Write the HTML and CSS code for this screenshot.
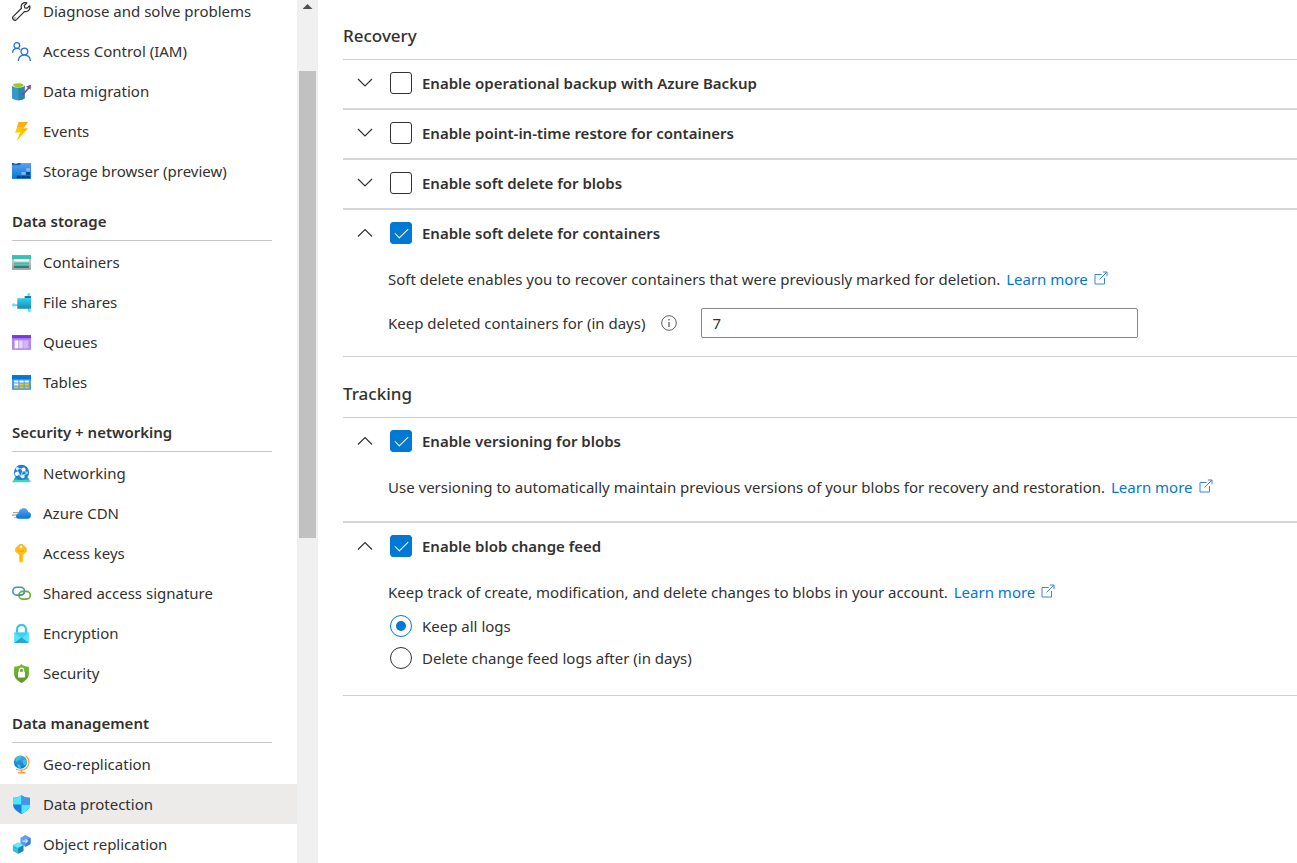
FILE: index.html
```
<!DOCTYPE html>
<html lang="en">
<head>
    <meta charset="utf-8">
    <meta name="viewport" content="width=device-width, initial-scale=1.0">
    <title>Data protection</title>
    <link rel="stylesheet" href="styles.css">
</head>
<body>
<svg class="defs" aria-hidden="true">
    <defs>
        <linearGradient id="blue" x1="0" y1="0" x2="0" y2="1"><stop offset="0" stop-color="#5ea0ef"/><stop offset="1" stop-color="#0078d4"/></linearGradient>
        <linearGradient id="cyan" x1="0" y1="0" x2="0" y2="1"><stop offset="0" stop-color="#32d4f5"/><stop offset="1" stop-color="#198ab3"/></linearGradient>
        <linearGradient id="green" x1="0" y1="0" x2="0" y2="1"><stop offset="0" stop-color="#76bc2d"/><stop offset="1" stop-color="#5e9624"/></linearGradient>
        <linearGradient id="gold" x1="0" y1="0" x2="0" y2="1"><stop offset="0" stop-color="#feb21a"/><stop offset="1" stop-color="#ffd70f"/></linearGradient>
        <linearGradient id="grey" x1="0" y1="0" x2="0" y2="1"><stop offset="0" stop-color="#e4e4e4"/><stop offset="1" stop-color="#9a9a9a"/></linearGradient>
        <symbol id="down" viewBox="0 0 16 16"><path d="M1 4l7 7 7-7" fill="none" stroke="#323130" stroke-width="1.200"/></symbol>
        <symbol id="up" viewBox="0 0 16 16"><path d="M1 11.500l7-7 7 7" fill="none" stroke="#323130" stroke-width="1.200"/></symbol>
        <symbol id="external" viewBox="0 0 14 14"><path d="M7.500 3.500H1v9.500h9.500V7M5.500 8.500L13 1M8.800 1H13v4.200" fill="none" stroke="#3b84dc" stroke-width="1"/></symbol>
    </defs>
</svg>
<div class="page">
    <nav class="sidebar">
        <div class="menu">
            <a href="#" class="item">
                <svg class="icon" viewBox="0 0 18 18"><path d="M16.800 3.600l-2.700 2.300-2-.4-.5-2L14 .9C11.700 0 8.900 1.300 8.700 4.100c0 .7.100 1.300.3 1.800L1.200 13.600c-1.700 1.900 1 4.900 3.100 3.100L12 8.900c2.800 1 5.800-1.700 4.800-5.300z" fill="none" stroke="#323130" stroke-width="1.200" stroke-linejoin="round"/><circle cx="2.800" cy="15" r=".6" fill="#323130"/></svg>
                Diagnose and solve problems
            </a>
            <a href="#" class="item">
                <svg class="icon" viewBox="0 0 18 18" fill="none" stroke="#1a6fdf" stroke-width="1.200"><circle cx="4.600" cy="3.300" r="2.700"/><circle cx="11.700" cy="8.900" r="3.200"/><path d="M.6 10.200C.7 7.500 2.500 6 4.800 6c1.200 0 2.200.5 2.900 1.300M6 18c0-3.500 2.500-5.900 5.700-5.900s5.700 2.400 5.700 5.900"/></svg>
                Access Control (IAM)
            </a>
            <a href="#" class="item">
                <svg class="icon" viewBox="0 0 18 18"><path d="M0 3v12c0 1.300 2.700 2.300 6 2.300s6-1 6-2.300V3z" fill="#3999c6"/><path d="M6 3v14.300c3.300 0 6-1 6-2.300V3z" fill="#2b86b5"/><ellipse cx="6" cy="3" rx="6" ry="2.300" fill="#edf3ee"/><ellipse cx="6" cy="3" rx="4.800" ry="1.700" fill="#9bca22"/><path d="M9 12.200l6-6.800-1.800-1.200L18 2.600l-.4 5-1.300-1.100-6.200 6.500z" fill="#804998"/></svg>
                Data migration
            </a>
            <a href="#" class="item">
                <svg class="icon" viewBox="0 0 18 18"><path d="M6.300 0h9l-4.800 6.200h4.800L4.400 18l3.200-8H3z" fill="#ffca00"/><path d="M6.300 0h9l-4.800 6.200h4.800L8 9.900l2.500-5.200L4.800 5z" fill="#fbae15"/></svg>
                Events
            </a>
            <a href="#" class="item">
                <svg class="icon" viewBox="0 0 18 18"><path d="M0 1h18v15H0z" fill="url(#blue)"/><path d="M0 1h8v2H0z" fill="#0064b8"/><path d="M2 1h3v1H2z" fill="#50e6ff"/><path d="M13.500 6H17v3h-3.500zM9 9.500h4v2.500H9z" fill="#83b9f9"/><path d="M13.500 9.500H17V12h-3.500zM4.500 13h3.800v2.500H4.500zM9 13h4v2.500H9zM13.500 13H17v2.500h-3.500z" fill="#003f86"/></svg>
                Storage browser (preview)
            </a>

            <h2 class="group">Data storage</h2>
            <a href="#" class="item">
                <svg class="icon" viewBox="0 0 18 18"><path d="M0 2h18v14H0z" fill="url(#grey)"/><path d="M0 2h18v4H0z" fill="#37c2b1"/><path d="M2 6h14v2H2z" fill="#fff"/><path d="M2 9h14v2H2z" fill="#37c2b1"/><path d="M2 12h14v2.200H2z" fill="#258277"/></svg>
                Containers
            </a>
            <a href="#" class="item">
                <svg class="icon" viewBox="0 0 18 18"><path d="M1.500 11.500H6M15 4l1-3M15 13l1.500 3.500" stroke="#0078d4" stroke-width=".8"/><path d="M12 3h6v4h-6z" fill="#005ba1"/><path d="M5 5h6.500L13 4.500h5V15H5z" fill="url(#cyan)"/><circle cx="1.600" cy="11.300" r="1.500" fill="#50e6ff"/><circle cx="15.900" cy="1.400" r="1.300" fill="#50e6ff"/><circle cx="16.500" cy="16.500" r="1.500" fill="#50e6ff"/></svg>
                File shares
            </a>
            <a href="#" class="item">
                <svg class="icon" viewBox="0 0 18 18"><path d="M0 2h18v14H0z" fill="#b186ee"/><path d="M0 2h18v3H0z" fill="#773adc"/><path d="M2.500 7H6v7.500H2.500z" fill="#fff"/><path d="M6.800 7h3.400v7.500H6.800z" fill="#e6d8fa"/><path d="M10.700 7H15.700v7.500h-5z" fill="#d0b6f6"/></svg>
                Queues
            </a>
            <a href="#" class="item">
                <svg class="icon" viewBox="0 0 18 18"><path d="M0 2h18v14H0z" fill="#4e9aeb"/><path d="M0 2h18v4H0z" fill="#0078d4"/><path d="M2 7h4v2H2zM7 7h4v2H7zM12 7h4v2h-4zM2 10h4v1.800H2z" fill="#fff"/><path d="M7 10h4v1.800H7zM12 10h4v1.800h-4zM2 12.800h4v1.700H2zM7 12.800h4v1.700H7zM12 12.800h4v1.700h-4z" fill="#f2cd00"/></svg>
                Tables
            </a>

            <h2 class="group">Security + networking</h2>
            <a href="#" class="item">
                <svg class="icon" viewBox="0 0 18 18"><path d="M3.200 12.500h11.600L18 17.400H0z" fill="#42d6b8"/><path d="M3.200 12.500h11.600l1.500 2.500H1.600z" fill="#2aa092"/><circle cx="9" cy="8" r="7.200" fill="#1b7fd9"/><path d="M4 4l7 1 3 4-6 3-4-8M8 12l3-7" fill="none" stroke="#9cd2ff" stroke-width="1"/><circle cx="5" cy="4.300" r="1.500" fill="#d8f0ff"/><circle cx="11" cy="5.200" r="1.900" fill="#fff"/><circle cx="4.700" cy="9.300" r="2" fill="#fff"/><circle cx="10.200" cy="11.800" r="1.800" fill="#e6f5ff"/><circle cx="14" cy="8.300" r="1.200" fill="#9cd2ff"/></svg>
                Networking
            </a>
            <a href="#" class="item">
                <svg class="icon" viewBox="0 0 18 18"><path d="M1 8.200h6M0 10.500h6M2 13h5" stroke="#a6a6a6" stroke-width="1.100"/><path d="M6.500 14C4.700 14 3.800 13 3.800 11.600c0-1.300 1-2.400 2.300-2.500C6.300 6.200 8.300 4 11 4c2.300 0 3.900 1.400 4.400 3.500 1.700.2 2.600 1.500 2.600 3.100 0 2-1.200 3.400-3 3.400z" fill="url(#blue)"/></svg>
                Azure CDN
            </a>
            <a href="#" class="item">
                <svg class="icon" viewBox="0 0 18 18"><path d="M7.300 0h2.500L14 4v3l-3.400 3.500V16.500L8.700 18l-1.900-1.500V10.500L3 7V4z" fill="url(#gold)"/><path d="M7.800 9.800h1v6.800h-1z" fill="#ff9300" opacity=".75"/><path d="M5.500 6.300h6v.8h-6z" fill="#ff9300"/><circle cx="8.600" cy="2.800" r="1.300" fill="#fff"/></svg>
                Access keys
            </a>
            <a href="#" class="item">
                <svg class="icon" viewBox="0 0 18 18" fill="none" stroke-width="1.500"><rect x=".8" y="3" width="11" height="7.500" rx="3.700" stroke="#3c8be0"/><rect x="6.500" y="7" width="10.800" height="7.300" rx="3.600" stroke="#6bae29"/><path d="M7 10.500h1.100c2 0 3.700-1.500 3.700-3.500" stroke="#3c8be0"/></svg>
                Shared access signature
            </a>
            <a href="#" class="item">
                <svg class="icon" viewBox="0 0 18 18"><path d="M4.800 9V5.500C4.800 2.900 6.400 1 9 1s4.200 1.900 4.200 4.500V9" fill="none" stroke="#32c5e9" stroke-width="2"/><rect x="2" y="8" width="14" height="10" rx=".8" fill="#50e6ff"/><path d="M2 8l7 5.500L16 8z" fill="#3fd0f0"/><path d="M2 18l7-5.500 7 5.500z" fill="#28a6cc"/></svg>
                Encryption
            </a>
            <a href="#" class="item">
                <svg class="icon" viewBox="0 0 18 18"><path d="M2 2.500C5 2.600 7.500 1.700 9 0c1.500 1.700 4 2.600 7 2.500V9c0 4.500-3.500 7-7 9-3.500-2-7-4.500-7-9z" fill="url(#green)"/><rect x="5.700" y="7.300" width="6.600" height="5.400" rx=".5" fill="#fff"/><path d="M7 7.500V6c0-1.200.8-2 2-2s2 .8 2 2v1.500" fill="none" stroke="#fff" stroke-width="1.200"/></svg>
                Security
            </a>

            <h2 class="group">Data management</h2>
            <a href="#" class="item">
                <svg class="icon" viewBox="0 0 18 18"><path d="M13 .8c4.800 4 3.700 11.700-3 13.400-2.200.5-4.300 0-6-1" fill="none" stroke="#f2a04a" stroke-width="1.200"/><path d="M8.200 14h1.600v2H13v1.500H5.500V16h2.700z" fill="#f2a04a"/><circle cx="8" cy="6.700" r="6.300" fill="url(#blue)"/><path d="M3.200 3c1.500-2 4-2.500 5.500-2L7.500 4 4.800 5.500 4 7zM10 5l3-.8 1 2.500-1.300 3.500-2-1.200zM5 8.500l3 1 .5 2.800-3-.8z" fill="#2fd0c3"/></svg>
                Geo-replication
            </a>
            <a href="#" class="item selected">
                <svg class="icon" viewBox="0 0 18 18"><path d="M1 2.500C4.500 2.600 7.300 1.700 9 0c1.700 1.700 4.500 2.600 8 2.500V9c0 4.500-4.500 7-8 9-3.500-2-8-4.500-8-9z" fill="#1380da"/><path d="M1 2.500C4.500 2.600 7.300 1.700 9 0v9H1zM9 9h8c0 4.500-4.500 7-8 9z" fill="#50e6ff"/><path d="M9 0c1.700 1.700 4.500 2.600 8 2.500V9H9z" fill="#4796e6"/></svg>
                Data protection
            </a>
            <a href="#" class="item">
                <svg class="icon" viewBox="0 0 18 18"><path d="M12.700 0L17.500 2.600v6L12.700 11.200 8 8.600v-6z" fill="#5ea0ef"/><path d="M12.700 5.500l4.800-2.900v6l-4.800 2.600z" fill="#2f7fe0"/><path d="M10 5.800h4.500M12.800 4l2 1.800-2 1.800" fill="none" stroke="#d5e8ff" stroke-width="1"/><path d="M5.800 7L10.800 9.600v5.600L5.800 17.800.8 15.200V9.600z" fill="#32bedd"/><path d="M5.800 7l5 2.600-5 2.700-5-2.700z" fill="#6ce9fb"/><path d="M5.800 12.300l5-2.700v5.600l-5 2.600z" fill="#198ab3"/></svg>
                Object replication
            </a>
        </div>
        <div class="scrollbar">
            <div class="arrow"></div>
            <div class="thumb"></div>
        </div>
    </nav>

    <main class="content">
        <h1 class="title">Recovery</h1>
        <section class="panel">
            <div class="row">
                <div class="header">
                    <button class="toggle" aria-label="Expand"><svg><use href="#down"/></svg></button>
                    <label class="option"><input type="checkbox">Enable operational backup with Azure Backup</label>
                </div>
            </div>
            <div class="row">
                <div class="header">
                    <button class="toggle" aria-label="Expand"><svg><use href="#down"/></svg></button>
                    <label class="option"><input type="checkbox">Enable point-in-time restore for containers</label>
                </div>
            </div>
            <div class="row">
                <div class="header">
                    <button class="toggle" aria-label="Expand"><svg><use href="#down"/></svg></button>
                    <label class="option"><input type="checkbox">Enable soft delete for blobs</label>
                </div>
            </div>
            <div class="row">
                <div class="header">
                    <button class="toggle" aria-label="Collapse"><svg><use href="#up"/></svg></button>
                    <label class="option"><input type="checkbox" checked>Enable soft delete for containers</label>
                </div>
                <div class="details">
                    <p>Soft delete enables you to recover containers that were previously marked for deletion. <a href="#" class="link">Learn more<svg><use href="#external"/></svg></a></p>
                    <div class="field">
                        <label for="days">Keep deleted containers for (in days)</label>
                        <svg class="info" viewBox="0 0 16 16"><circle cx="8" cy="8" r="7.300" fill="none" stroke="#605e5c"/><path d="M8 7v5M8 4v1.500" stroke="#323130"/></svg>
                        <input type="text" id="days" class="text-box" value="7">
                    </div>
                </div>
            </div>
        </section>

        <h1 class="title">Tracking</h1>
        <section class="panel">
            <div class="row">
                <div class="header">
                    <button class="toggle" aria-label="Collapse"><svg><use href="#up"/></svg></button>
                    <label class="option"><input type="checkbox" checked>Enable versioning for blobs</label>
                </div>
                <div class="details">
                    <p>Use versioning to automatically maintain previous versions of your blobs for recovery and restoration. <a href="#" class="link">Learn more<svg><use href="#external"/></svg></a></p>
                </div>
            </div>
            <div class="row">
                <div class="header">
                    <button class="toggle" aria-label="Collapse"><svg><use href="#up"/></svg></button>
                    <label class="option"><input type="checkbox" checked>Enable blob change feed</label>
                </div>
                <div class="details">
                    <p>Keep track of create, modification, and delete changes to blobs in your account. <a href="#" class="link">Learn more<svg><use href="#external"/></svg></a></p>
                    <div class="logs">
                        <label class="choice"><input type="radio" name="logs" checked>Keep all logs</label>
                        <label class="choice"><input type="radio" name="logs">Delete change feed logs after (in days)</label>
                    </div>
                </div>
            </div>
        </section>
    </main>
</div>
</body>
</html>
```
FILE: styles.css
```
* {
    box-sizing: border-box;
    margin: 0;
    padding: 0;
}

body {
    overflow: hidden;
    background-color: #ffffff;
    color: #323130;
    font-family: "Noto Sans", "Open Sans", sans-serif;
    font-size: 15px;
    line-height: 20px;
}

a {
    color: inherit;
    text-decoration: none;
}

.defs {
    position: absolute;
    width: 0;
    height: 0;
}

.page {
    display: flex;
    height: 100vh;
}

/* sidebar */
.sidebar {
    display: flex;
    flex: none;
    width: 318px;
    overflow: hidden;
}

.menu {
    flex: 1;
    margin-top: -9px;
}

.item {
    display: flex;
    align-items: center;
    gap: 12px;
    height: 40px;
    padding-left: 12px;
}

.item.selected {
    background-color: #edebe9;
}

.icon {
    flex: none;
    width: 19px;
    height: 19px;
}

.group {
    margin: 0 25px 1px 12px;
    padding: 20px 0 9px;
    border-bottom: 1px #c8c6c4 solid;
    font-size: 15px;
    font-weight: 600;
}

.scrollbar {
    width: 21px;
    padding: 4px 2px 0;
    background-color: #f0f0f0;
}

.arrow {
    width: 10px;
    height: 5px;
    margin: 0 auto 62px;
    background-color: #505050;
    clip-path: polygon(50% 0, 100% 100%, 0 100%);
}

.thumb {
    width: 17px;
    height: 467px;
    background-color: #c1c1c1;
}

/* settings */
.content {
    flex: 1;
    min-width: 0;
    padding-left: 25px;
    overflow: hidden;
}

.title {
    padding: 26px 0 13px;
    font-size: 17px;
    font-weight: 500;
}

.panel {
    margin-bottom: 1px;
    border-top: 1px #d2d0ce solid;
    border-bottom: 1px #d2d0ce solid;
}

.row + .row {
    border-top: 2px #d6d6d6 solid;
}

.header {
    display: flex;
    align-items: center;
    height: 48px;
    padding: 0 0 2px 14px;
}

.toggle {
    width: 16px;
    height: 16px;
    margin-right: 17px;
    border: none;
    background: none;
}

.toggle svg {
    display: block;
    width: 16px;
    height: 16px;
}

.option, .choice {
    display: flex;
    align-items: center;
    gap: 10px;
}

.option {
    font-weight: 600;
}

input[type="checkbox"], input[type="radio"] {
    display: grid;
    place-items: center;
    flex: none;
    width: 22px;
    height: 22px;
    border: 1px #323130 solid;
    border-radius: 3px;
    -webkit-appearance: none;
    appearance: none;
}

input[type="checkbox"]:checked {
    border-color: #0078d4;
    background-color: #0078d4;
}

input[type="checkbox"]:checked::before {
    content: "";
    width: 6px;
    height: 12px;
    margin-bottom: 4px;
    border-right: 1px #ffffff solid;
    border-bottom: 1px #ffffff solid;
    transform: rotate(45deg);
}

input[type="radio"] {
    border-radius: 50%;
}

input[type="radio"]:checked {
    border-color: #0078d4;
}

input[type="radio"]:checked::before {
    content: "";
    width: 10px;
    height: 10px;
    border-radius: 50%;
    background-color: #0078d4;
}

.details {
    padding: 11px 0 24px 45px;
}

.link {
    margin-left: 2px;
    color: #0078d4;
}

.link svg {
    width: 14px;
    height: 14px;
    margin-left: 6px;
}

.field {
    display: flex;
    align-items: center;
    margin: 19px 0 -6px;
}

.info {
    width: 16px;
    height: 16px;
    margin: 0 24px 0 16px;
}

.text-box {
    width: 437px;
    height: 30px;
    padding: 0 10px;
    border: 1px #8a8886 solid;
    border-radius: 2px;
    color: inherit;
    font: inherit;
}

.logs {
    display: grid;
    gap: 10px;
    padding: 13px 0 2px 2px;
}
```
